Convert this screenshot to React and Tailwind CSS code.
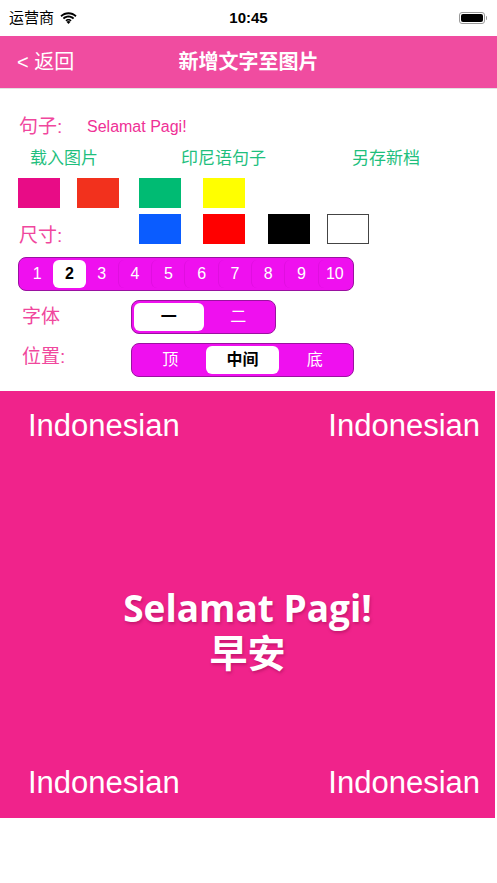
import { useState } from "react";

const FONT = { fontFamily: '"Liberation Sans", "Noto Sans CJK SC", sans-serif' };

const ROW1 = ["bg-[#e80c86]", "bg-[#f2311d]", "bg-[#00bb73]", "bg-[#ffff00]"];

function Segmented({ items, value, onChange, className }) {
  return (
    <div className={`flex h-[34px] rounded-[8px] border border-[#9a12a0] bg-[#ef10ef] p-[2px] ${className}`}>
      {items.map((it, i) => (
        <button
          key={it}
          onClick={() => onChange(i)}
          className={`flex-1 flex items-center justify-center rounded-[6px] text-[16px] ${
            value === i ? "bg-white text-black font-semibold" : "text-white"
          } ${i > 0 && value !== i && value !== i - 1 ? "border-l border-[#e00ee0]" : ""}`}
        >
          {it}
        </button>
      ))}
    </div>
  );
}

export default function App() {
  const [size, setSize] = useState(1);
  const [font, setFont] = useState(0);
  const [pos, setPos] = useState(1);

  return (
    <div className="w-[497px] h-[883px] bg-white overflow-hidden" style={FONT}>
      {/* Status bar */}
      <div className="h-[36px] flex items-center justify-between px-[9px] text-black">
        <div className="flex items-center gap-[6px] text-[15px]">
          <span>运营商</span>
          <svg width="17" height="12" viewBox="0 0 17 12">
            <path d="M8.5 2.2c2.6 0 5 1 6.8 2.7l1.3-1.4C14.4 1.4 11.5.2 8.5.2S2.6 1.4.4 3.5l1.3 1.4C3.5 3.2 5.9 2.2 8.5 2.2z" fill="#000" />
            <path d="M8.5 5.6c1.7 0 3.2.6 4.4 1.7l1.3-1.4C12.7 4.5 10.7 3.6 8.5 3.6S4.3 4.5 2.8 5.9l1.3 1.4c1.2-1.1 2.7-1.7 4.4-1.7z" fill="#000" />
            <path d="M8.5 8.9c.8 0 1.5.3 2.1.8l-2.1 2.3-2.1-2.3c.6-.5 1.3-.8 2.1-.8z" fill="#000" />
            <path d="M8.5 7c1.2 0 2.3.5 3.1 1.2l-1 1.1c-.6-.5-1.3-.8-2.1-.8s-1.5.3-2.1.8l-1-1.1C6.2 7.5 7.3 7 8.5 7z" fill="#000" />
          </svg>
        </div>
        <div className="absolute left-1/2 -translate-x-1/2 text-[15px] font-semibold">10:45</div>
        <div className="flex items-center gap-[1px] pr-[1px]">
          <div className="w-[26px] h-[12px] rounded-[3px] border border-[#999] p-[1px]">
            <div className="w-full h-full rounded-[2px] bg-black" />
          </div>
          <div className="w-[1.5px] h-[4px] rounded-r bg-[#999]" />
        </div>
      </div>

      {/* Nav bar */}
      <div className="relative h-[53px] bg-[#f04ca0] border-b border-[#e2e2e2] flex items-center text-white">
        <span className="pl-[17px] text-[20px]">&lt; 返回</span>
        <span className="absolute left-1/2 -translate-x-1/2 text-[20px] font-semibold">新增文字至图片</span>
      </div>

      {/* Controls */}
      <div className="px-[18px] pt-[26px]">
        <div className="flex items-center h-[24px]">
          <span className="pl-[1px] w-[69px] text-[19px] text-[#f0479d]">句子:</span>
          <span className="text-[16px] text-[#ef3096]">Selamat Pagi!</span>
        </div>
        <div className="flex items-center h-[26px] mt-[7px] text-[17px] text-[#1fbf7e]">
          <span className="pl-[12px] w-[163px]">载入图片</span>
          <span className="w-[171px]">印尼语句子</span>
          <span>另存新档</span>
        </div>
        <div className="flex mt-[6px] gap-[17px]">
          {ROW1.map((c, i) => (
            <div key={c} className={`w-[42px] h-[30px] ${c} ${i === 2 ? "ml-[3px]" : ""} ${i === 3 ? "ml-[5px]" : ""}`} />
          ))}
        </div>
        <div className="flex items-end mt-[6px]">
          <span className="pl-[1px] w-[121px] text-[19px] text-[#f0479d] leading-[24px] mb-[-4px]">尺寸:</span>
          <div className="flex">
            <div className="w-[42px] h-[30px] bg-[#0a5cff]" />
            <div className="w-[42px] h-[30px] bg-[#ff0000] ml-[22px]" />
            <div className="w-[42px] h-[30px] bg-black ml-[23px]" />
            <div className="w-[42px] h-[30px] bg-white border-[1.5px] border-[#444] ml-[17px]" />
          </div>
        </div>

        <Segmented
          className="mt-[13px] w-[336px]"
          items={["1", "2", "3", "4", "5", "6", "7", "8", "9", "10"]}
          value={size}
          onChange={setSize}
        />

        <div className="flex items-center mt-[9px]">
          <span className="pl-[4px] w-[113px] text-[19px] text-[#f0479d]">字体</span>
          <Segmented className="w-[145px]" items={["一", "二"]} value={font} onChange={setFont} />
        </div>
        <div className="flex items-center mt-[9px]">
          <span className="pl-[4px] w-[113px] text-[19px] text-[#f0479d] mt-[-6px]">位置:</span>
          <Segmented className="w-[223px]" items={["顶", "中间", "底"]} value={pos} onChange={setPos} />
        </div>
      </div>

      {/* Preview */}
      <div className="mt-[14px] w-[495px] h-[427px] bg-[#f0238b] flex flex-col justify-between px-[28px] py-[17px] text-white">
        <div className="flex justify-between text-[31px] leading-[36px]">
          <span>Indonesian</span>
          <span className="mr-[-13px]">Indonesian</span>
        </div>
        <div
          className="flex flex-col items-center font-bold mt-[48px]"
          style={{ textShadow: "1px 2px 3px rgba(120,0,60,0.35)" }}
        >
          <span className="text-[37px] leading-[44px]" style={{ fontFamily: '"Open Sans", "Noto Sans CJK SC", sans-serif' }}>Selamat Pagi!</span>
          <span className="text-[38px] leading-[42px]" style={{ fontFamily: '"Noto Sans CJK SC", sans-serif' }}>早安</span>
        </div>
        <div className="flex justify-between text-[31px] leading-[36px]">
          <span>Indonesian</span>
          <span className="mr-[-13px]">Indonesian</span>
        </div>
      </div>
    </div>
  );
}
